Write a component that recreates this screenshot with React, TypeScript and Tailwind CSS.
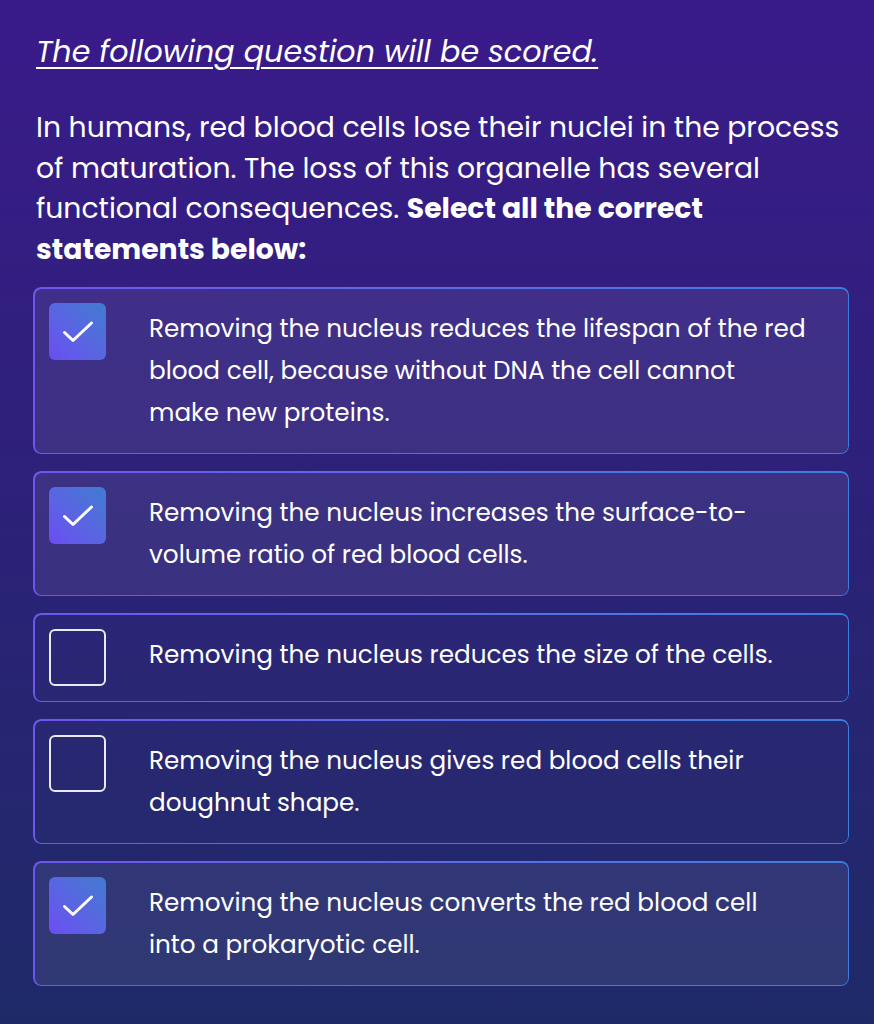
const options = [
  {
    lines: [
      "Removing the nucleus reduces the lifespan of the red",
      "blood cell, because without DNA the cell cannot",
      "make new proteins.",
    ],
    checked: true,
  },
  {
    lines: ["Removing the nucleus increases the surface-to-", "volume ratio of red blood cells."],
    checked: true,
  },
  { lines: ["Removing the nucleus reduces the size of the cells."], checked: false },
  {
    lines: ["Removing the nucleus gives red blood cells their", "doughnut shape."],
    checked: false,
  },
  {
    lines: ["Removing the nucleus converts the red blood cell", "into a prokaryotic cell."],
    checked: true,
  },
];

function Option({ lines, checked }: { lines: string[]; checked: boolean }) {
  return (
    <div
      className={`relative flex items-start rounded-lg p-4 ${
        checked ? "bg-white/[0.07]" : "bg-white/[0.01]"
      }`}
    >
      <span className="pointer-events-none absolute inset-0 rounded-lg bg-gradient-to-r from-[#6e55ee] to-[#3d7ee0] p-[1.5px] [mask:linear-gradient(#000_0_0)_content-box_exclude,linear-gradient(#000_0_0)]" />
      {checked ? (
        <div className="flex h-[57px] w-[57px] shrink-0 items-center justify-center rounded-md bg-gradient-to-tr from-[#6b4bf2] to-[#3e7bd0]">
          <svg width="32" height="24" viewBox="0 0 32 24" fill="none">
            <path
              d="M2.5 12.5 L11 20.5 L29.5 3"
              stroke="white"
              strokeWidth="3"
              strokeLinecap="round"
              strokeLinejoin="round"
            />
          </svg>
        </div>
      ) : (
        <div className="h-[57px] w-[57px] shrink-0 rounded-md border-2 border-white/90" />
      )}
      <p className="ml-[43px] py-[4.5px] text-[24.7px] leading-[42px] text-white">
        {lines.map((l, i) => (
          <span key={i} className="block whitespace-nowrap">
            {l}
          </span>
        ))}
      </p>
    </div>
  );
}

export default function App() {
  return (
    <div className="min-h-[1024px] w-full bg-gradient-to-b from-[#3a1a8a] via-[#2c2178] to-[#1e2a68] font-['Poppins','Inter','Noto_Sans',sans-serif] text-white">
      <div className="pt-8 pl-[36px] pr-[20px]">
        <h1 className="text-[30.2px] italic leading-[40px] underline decoration-[1.5px] underline-offset-[5px]">
          The following question will be scored.
        </h1>
        <p className="mt-[35px] text-[28.25px] leading-[40.5px]">
          In humans, red blood cells lose their nuclei in the process of
          maturation. The loss of this organelle has several functional
          consequences.{" "}
          <span className="font-bold">
            Select all the correct statements below:
          </span>
        </p>
      </div>
      <div className="mt-[18px] flex flex-col gap-[17px] pb-10 pl-[33px] pr-[25px]">
        {options.map((o, i) => (
          <Option key={i} lines={o.lines} checked={o.checked} />
        ))}
      </div>
    </div>
  );
}
